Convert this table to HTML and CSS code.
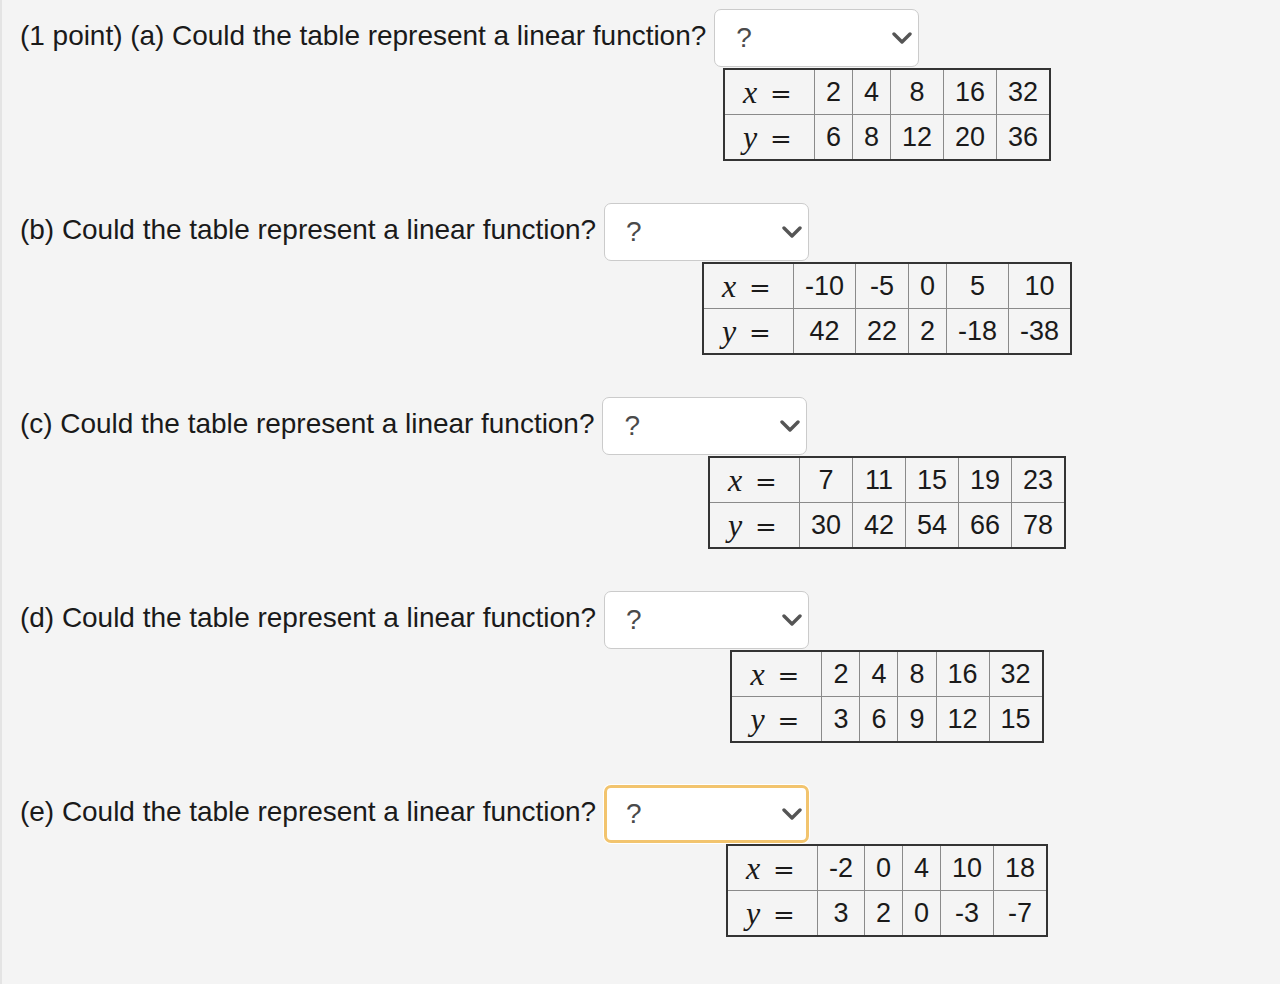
FILE: index.html
```html
<!DOCTYPE html>
<html>
<head>
<meta charset="utf-8">
<link rel="stylesheet" href="styles.css">
</head>
<body>
<div class="problem">

  <div class="part">
    <div class="question">
      <span class="qtext">(1 point) (a) Could the table represent a linear function?</span>
      <div class="select"><span class="sel-val">?</span><svg class="chev" width="20" height="12" viewBox="0 0 20 12"><path d="M2 2 L10 10 L18 2" fill="none" stroke="#555" stroke-width="3.4" stroke-linecap="round" stroke-linejoin="round"/></svg></div>
    </div>
    <div class="table-wrap">
      <table class="vals">
        <tr><td class="lbl"><span class="mi">x</span><span class="mo">=</span></td><td>2</td><td>4</td><td>8</td><td>16</td><td>32</td></tr>
        <tr><td class="lbl"><span class="mi">y</span><span class="mo">=</span></td><td>6</td><td>8</td><td>12</td><td>20</td><td>36</td></tr>
      </table>
    </div>
  </div>

  <div class="part">
    <div class="question">
      <span class="qtext">(b) Could the table represent a linear function?</span>
      <div class="select"><span class="sel-val">?</span><svg class="chev" width="20" height="12" viewBox="0 0 20 12"><path d="M2 2 L10 10 L18 2" fill="none" stroke="#555" stroke-width="3.4" stroke-linecap="round" stroke-linejoin="round"/></svg></div>
    </div>
    <div class="table-wrap">
      <table class="vals">
        <tr><td class="lbl"><span class="mi">x</span><span class="mo">=</span></td><td>-10</td><td>-5</td><td>0</td><td>5</td><td>10</td></tr>
        <tr><td class="lbl"><span class="mi">y</span><span class="mo">=</span></td><td>42</td><td>22</td><td>2</td><td>-18</td><td>-38</td></tr>
      </table>
    </div>
  </div>

  <div class="part">
    <div class="question">
      <span class="qtext">(c) Could the table represent a linear function?</span>
      <div class="select"><span class="sel-val">?</span><svg class="chev" width="20" height="12" viewBox="0 0 20 12"><path d="M2 2 L10 10 L18 2" fill="none" stroke="#555" stroke-width="3.4" stroke-linecap="round" stroke-linejoin="round"/></svg></div>
    </div>
    <div class="table-wrap">
      <table class="vals">
        <tr><td class="lbl"><span class="mi">x</span><span class="mo">=</span></td><td>7</td><td>11</td><td>15</td><td>19</td><td>23</td></tr>
        <tr><td class="lbl"><span class="mi">y</span><span class="mo">=</span></td><td>30</td><td>42</td><td>54</td><td>66</td><td>78</td></tr>
      </table>
    </div>
  </div>

  <div class="part">
    <div class="question">
      <span class="qtext">(d) Could the table represent a linear function?</span>
      <div class="select"><span class="sel-val">?</span><svg class="chev" width="20" height="12" viewBox="0 0 20 12"><path d="M2 2 L10 10 L18 2" fill="none" stroke="#555" stroke-width="3.4" stroke-linecap="round" stroke-linejoin="round"/></svg></div>
    </div>
    <div class="table-wrap">
      <table class="vals">
        <tr><td class="lbl"><span class="mi">x</span><span class="mo">=</span></td><td>2</td><td>4</td><td>8</td><td>16</td><td>32</td></tr>
        <tr><td class="lbl"><span class="mi">y</span><span class="mo">=</span></td><td>3</td><td>6</td><td>9</td><td>12</td><td>15</td></tr>
      </table>
    </div>
  </div>

  <div class="part">
    <div class="question">
      <span class="qtext">(e) Could the table represent a linear function?</span>
      <div class="select focused"><span class="sel-val">?</span><svg class="chev" width="20" height="12" viewBox="0 0 20 12"><path d="M2 2 L10 10 L18 2" fill="none" stroke="#555" stroke-width="3.4" stroke-linecap="round" stroke-linejoin="round"/></svg></div>
    </div>
    <div class="table-wrap">
      <table class="vals">
        <tr><td class="lbl"><span class="mi">x</span><span class="mo">=</span></td><td>-2</td><td>0</td><td>4</td><td>10</td><td>18</td></tr>
        <tr><td class="lbl"><span class="mi">y</span><span class="mo">=</span></td><td>3</td><td>2</td><td>0</td><td>-3</td><td>-7</td></tr>
      </table>
    </div>
  </div>

</div>
</body>
</html>
```
FILE: styles.css
```css
html, body {
  margin: 0;
  padding: 0;
}
body {
  background: #f4f4f4;
  border-left: 2px solid #e4e4e4;
  min-height: 984px;
  box-sizing: border-box;
  font-family: "Liberation Sans", Arial, sans-serif;
  color: #1a1a1a;
}
.problem {
  padding: 9px 0 0 18px;
}
.part {
  margin-bottom: 42px;
}
.question {
  display: flex;
  align-items: center;
  gap: 8px;
  height: 58px;
}
.qtext {
  font-size: 28px;
  letter-spacing: -0.03px;
  position: relative;
  top: -2px;
}
.select {
  width: 205px;
  height: 58px;
  box-sizing: border-box;
  background: #fff;
  border: 1px solid #cbcbcb;
  border-radius: 7px;
  display: flex;
  align-items: center;
  justify-content: space-between;
  padding: 0 6px 0 21px;
}
.select.focused {
  border: 3px solid #f2c46e;
  padding-left: 19px;
  padding-right: 4px;
  box-shadow: 0 0 0 1px #fff;
}
.sel-val {
  font-size: 28px;
  color: #4a4a4a;
}
.chev {
  display: block;
}
.table-wrap {
  display: flex;
  justify-content: center;
  width: 700px;
  margin-left: 517px;
  margin-top: 1px;
}
.vals {
  border-collapse: collapse;
  border: 2px solid #333;
  font-size: 27px;
}
.vals td {
  border: 1px solid #8a8a8a;
  height: 44px;
  padding: 0 11px;
  text-align: center;
  line-height: 1;
}
.vals td.lbl {
  padding: 0 22px 0 18px;
  white-space: nowrap;
}
.mi {
  font-family: "Liberation Serif", "Times New Roman", serif;
  font-style: italic;
  font-size: 32px;
}
.mo {
  font-family: "DejaVu Serif", "Liberation Serif", serif;
  font-size: 26px;
  margin-left: 13px;
}
```
